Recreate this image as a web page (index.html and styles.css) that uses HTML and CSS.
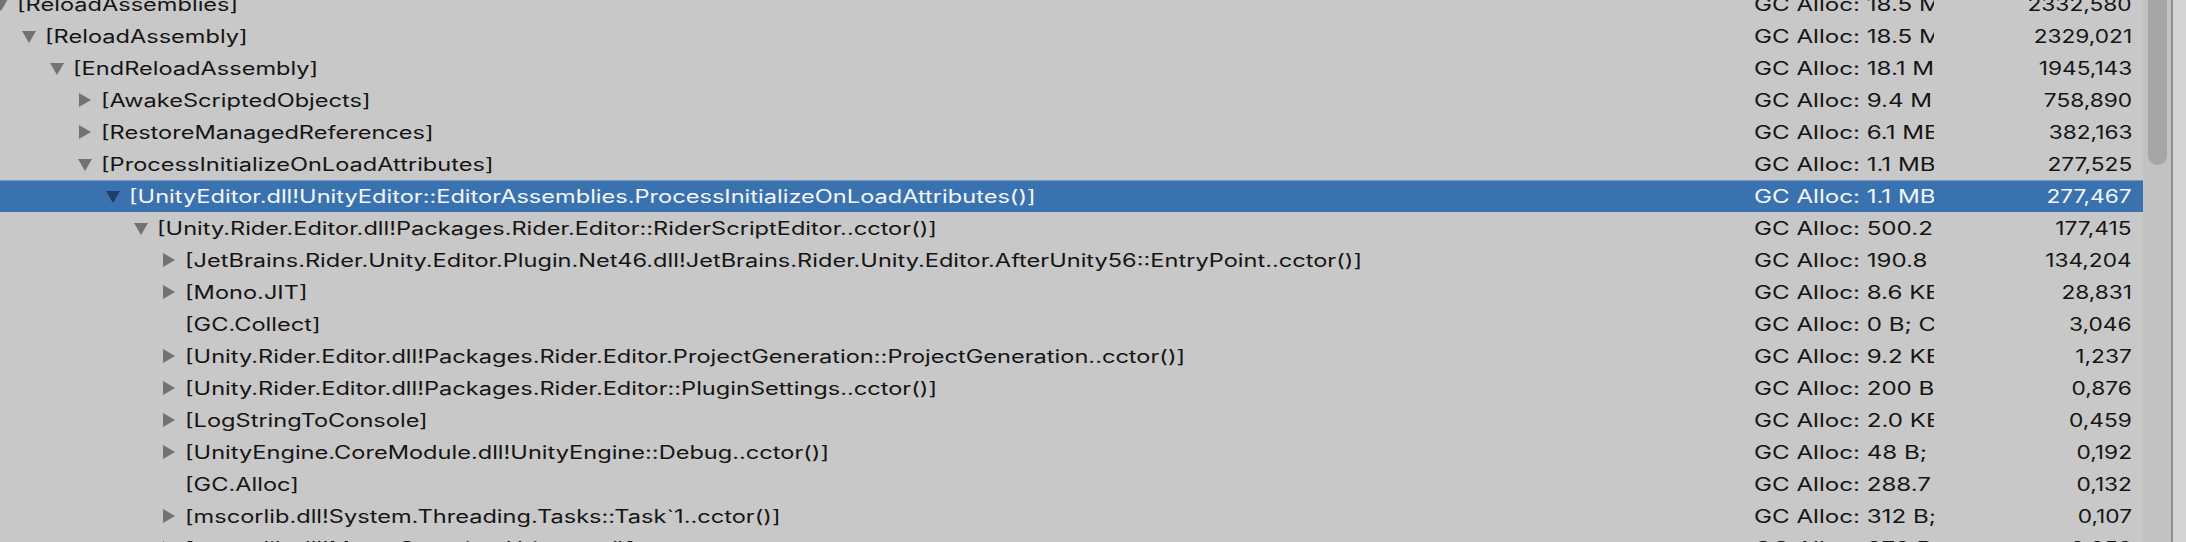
FILE: index.html
```html
<!DOCTYPE html>
<html>
<head>
<meta charset="utf-8">
<link rel="stylesheet" href="styles.css">
</head>
<body>
<div class="window">
  <div class="list">
    <div class="rows">
      <div class="row"><div class="name lv0"><span class="tog down"></span><span class="label">[ReloadAssemblies]</span></div><div class="gc"><span class="txt">GC Alloc: 18.5 MB; GC Count: 1</span></div><div class="ms"><span class="num">2332,580</span></div></div>
      <div class="row"><div class="name lv1"><span class="tog down"></span><span class="label">[ReloadAssembly]</span></div><div class="gc"><span class="txt">GC Alloc: 18.5 MB; GC Count: 1</span></div><div class="ms"><span class="num">2329,021</span></div></div>
      <div class="row"><div class="name lv2"><span class="tog down"></span><span class="label">[EndReloadAssembly]</span></div><div class="gc"><span class="txt">GC Alloc: 18.1 MB; GC Count: 1</span></div><div class="ms"><span class="num">1945,143</span></div></div>
      <div class="row"><div class="name lv3"><span class="tog right"></span><span class="label">[AwakeScriptedObjects]</span></div><div class="gc"><span class="txt">GC Alloc: 9.4 MB; GC Count: 1</span></div><div class="ms"><span class="num">758,890</span></div></div>
      <div class="row"><div class="name lv3"><span class="tog right"></span><span class="label">[RestoreManagedReferences]</span></div><div class="gc"><span class="txt">GC Alloc: 6.1 MB; GC Count: 1</span></div><div class="ms"><span class="num">382,163</span></div></div>
      <div class="row"><div class="name lv3"><span class="tog down"></span><span class="label">[ProcessInitializeOnLoadAttributes]</span></div><div class="gc"><span class="txt">GC Alloc: 1.1 MB; GC Count: 1</span></div><div class="ms"><span class="num">277,525</span></div></div>
      <div class="row selected"><div class="name lv4"><span class="tog down"></span><span class="label">[UnityEditor.dll!UnityEditor::EditorAssemblies.ProcessInitializeOnLoadAttributes()]</span></div><div class="gc"><span class="txt">GC Alloc: 1.1 MB; GC Count: 1</span></div><div class="ms"><span class="num">277,467</span></div></div>
      <div class="row"><div class="name lv5"><span class="tog down"></span><span class="label">[Unity.Rider.Editor.dll!Packages.Rider.Editor::RiderScriptEditor..cctor()]</span></div><div class="gc"><span class="txt">GC Alloc: 500.2 KB; GC Count: 1</span></div><div class="ms"><span class="num">177,415</span></div></div>
      <div class="row"><div class="name lv6"><span class="tog right"></span><span class="label">[JetBrains.Rider.Unity.Editor.Plugin.Net46.dll!JetBrains.Rider.Unity.Editor.AfterUnity56::EntryPoint..cctor()]</span></div><div class="gc"><span class="txt">GC Alloc: 190.8 KB; GC Count: 1</span></div><div class="ms"><span class="num">134,204</span></div></div>
      <div class="row"><div class="name lv6"><span class="tog right"></span><span class="label">[Mono.JIT]</span></div><div class="gc"><span class="txt">GC Alloc: 8.6 KB; GC Count: 0</span></div><div class="ms"><span class="num">28,831</span></div></div>
      <div class="row"><div class="name lv6"><span class="tog"></span><span class="label">[GC.Collect]</span></div><div class="gc"><span class="txt">GC Alloc: 0 B; Calls: 1</span></div><div class="ms"><span class="num">3,046</span></div></div>
      <div class="row"><div class="name lv6"><span class="tog right"></span><span class="label">[Unity.Rider.Editor.dll!Packages.Rider.Editor.ProjectGeneration::ProjectGeneration..cctor()]</span></div><div class="gc"><span class="txt">GC Alloc: 9.2 KB; GC Count: 0</span></div><div class="ms"><span class="num">1,237</span></div></div>
      <div class="row"><div class="name lv6"><span class="tog right"></span><span class="label">[Unity.Rider.Editor.dll!Packages.Rider.Editor::PluginSettings..cctor()]</span></div><div class="gc"><span class="txt">GC Alloc: 200 B; GC Count: 0</span></div><div class="ms"><span class="num">0,876</span></div></div>
      <div class="row"><div class="name lv6"><span class="tog right"></span><span class="label">[LogStringToConsole]</span></div><div class="gc"><span class="txt">GC Alloc: 2.0 KB; GC Count: 0</span></div><div class="ms"><span class="num">0,459</span></div></div>
      <div class="row"><div class="name lv6"><span class="tog right"></span><span class="label">[UnityEngine.CoreModule.dll!UnityEngine::Debug..cctor()]</span></div><div class="gc"><span class="txt">GC Alloc: 48 B; (1 call)</span></div><div class="ms"><span class="num">0,192</span></div></div>
      <div class="row"><div class="name lv6"><span class="tog"></span><span class="label">[GC.Alloc]</span></div><div class="gc"><span class="txt">GC Alloc: 288.7 KB; GC Count: 0</span></div><div class="ms"><span class="num">0,132</span></div></div>
      <div class="row"><div class="name lv6"><span class="tog right"></span><span class="label">[mscorlib.dll!System.Threading.Tasks::Task`1..cctor()]</span></div><div class="gc"><span class="txt">GC Alloc: 312 B; GC Count: 0</span></div><div class="ms"><span class="num">0,107</span></div></div>
      <div class="row"><div class="name lv6"><span class="tog right"></span><span class="label">[mscorlib.dll!Mono.Security::Uri..cctor()]</span></div><div class="gc"><span class="txt">GC Alloc: 272 B; GC Count: 0</span></div><div class="ms"><span class="num">0,053</span></div></div>
    </div>
  </div>
  <div class="scrollbar"><div class="thumb"></div></div>
  <div class="edge"></div>
</div>
</body>
</html>
```
FILE: styles.css
```css
html, body {
  margin: 0;
  padding: 0;
  background: #c8c8c8;
}
.window {
  display: flex;
  width: 2186px;
  height: 542px;
  overflow: hidden;
}
.list {
  width: 2143px;
  flex: none;
  overflow: hidden;
}
.rows {
  margin-top: -12px;
}
.row {
  display: grid;
  grid-template-columns: 1754px 180px 198px 11px;
  height: 32px;
  align-items: center;
  color: #151515;
  font-family: Inter, "Noto Sans", sans-serif;
  font-size: 18px;
}
.row.selected {
  background: #3a72b0;
  color: #f4f7fb;
  box-shadow: inset 0 1px 0 #7098c6;
}
.name {
  display: flex;
  align-items: center;
  overflow: hidden;
  white-space: nowrap;
  margin-left: -6px;
}
.label, .txt, .num {
  display: inline-block;
  white-space: nowrap;
  transform: scaleX(1.31);
  transform-origin: left center;
}
.txt {
  transform: scaleX(1.34);
}
.num {
  transform-origin: right center;
  transform: scaleX(1.26);
}
.lv0 { padding-left: 0; }
.lv1 { padding-left: 28px; }
.lv2 { padding-left: 56px; }
.lv3 { padding-left: 84px; }
.lv4 { padding-left: 112px; }
.lv5 { padding-left: 140px; }
.lv6 { padding-left: 168px; }
.tog {
  flex: none;
  width: 23px;
  height: 32px;
  position: relative;
}
.tog.down::before {
  content: "";
  position: absolute;
  left: 0;
  top: 11px;
  border-left: 7px solid transparent;
  border-right: 7px solid transparent;
  border-top: 12px solid #737373;
}
.tog.right::before {
  content: "";
  position: absolute;
  left: 1px;
  top: 9px;
  border-top: 7px solid transparent;
  border-bottom: 7px solid transparent;
  border-left: 12px solid #737373;
}
.selected .tog.down::before {
  border-top-color: #1d3e66;
}
.gc, .ms {
  white-space: nowrap;
  overflow: hidden;
}
.ms {
  text-align: right;
}
.scrollbar {
  width: 28px;
  flex: none;
  background: #c2c2c2;
  position: relative;
}
.thumb {
  position: absolute;
  left: 5px;
  right: 4px;
  top: -8px;
  height: 173px;
  border-radius: 9px;
  background: #a6a6a6;
}
.edge {
  width: 2px;
  flex: none;
  background: #8c8c8c;
}
.window::after {
  content: "";
  flex: 1;
  background: #d4d4d4;
}
```
